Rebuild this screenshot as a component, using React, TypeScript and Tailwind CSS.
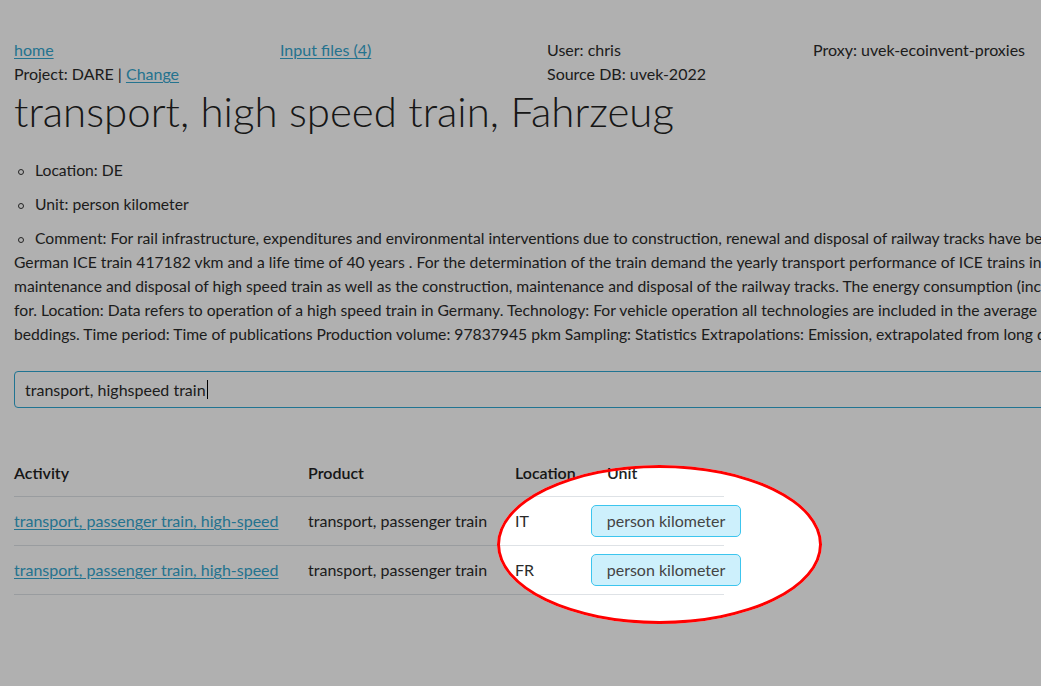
import React from 'react';

const linkCls = 'text-[#35a7cf] underline underline-offset-2';

const commentLines = [
  'Comment: For rail infrastructure, expenditures and environmental interventions due to construction, renewal and disposal of railway tracks have been',
  'German ICE train 417182 vkm and a life time of 40 years . For the determination of the train demand the yearly transport performance of ICE trains in Germany',
  'maintenance and disposal of high speed train as well as the construction, maintenance and disposal of the railway tracks. The energy consumption (incl.',
  'for. Location: Data refers to operation of a high speed train in Germany. Technology: For vehicle operation all technologies are included in the average',
  'beddings. Time period: Time of publications Production volume: 97837945 pkm Sampling: Statistics Extrapolations: Emission, extrapolated from long distance',
];

const rows = [
  { activity: 'transport, passenger train, high-speed', product: 'transport, passenger train', location: 'IT', unit: 'person kilometer' },
  { activity: 'transport, passenger train, high-speed', product: 'transport, passenger train', location: 'FR', unit: 'person kilometer' },
];

const Bullet = () => (
  <span className="inline-flex w-[21px] items-center align-middle">
    <span className="ml-[4px] h-[6px] w-[6px] rounded-full border border-[#333]"></span>
  </span>
);

export default function App() {
  return (
    <div
      className="relative w-[1041px] h-[686px] overflow-hidden bg-white text-[#2b2b2b]"
      style={{ fontFamily: 'Lato, "Open Sans", sans-serif' }}
    >
      <div className="w-[1200px] pl-[14px] pt-[38px] text-[16px]">
        <div className="grid grid-cols-[266px_267px_266px_1fr] leading-6">
          <div><a className={linkCls}>home</a></div>
          <div><a className={linkCls}>Input files (4)</a></div>
          <div>User: chris</div>
          <div>Proxy: uvek-ecoinvent-proxies</div>
          <div>Project: DARE | <a className={linkCls}>Change</a></div>
          <div></div>
          <div>Source DB: uvek-2022</div>
          <div></div>
        </div>

        <h1 className="mt-[1px] text-[42px] leading-[48px] font-light text-[#222]">
          transport, high speed train, Fahrzeug
        </h1>

        <ul className="mt-[23px] leading-6 text-[15.7px]">
          <li className="mb-[10px]"><Bullet />Location: DE</li>
          <li className="mb-[10px]"><Bullet />Unit: person kilometer</li>
          <li className="mb-[10px] whitespace-nowrap">
            {commentLines.map((line, i) => (
              <div key={i}>
                {i === 0 && <Bullet />}
                {line}
              </div>
            ))}
          </li>
        </ul>

        <div className="mt-[25px] flex h-[37px] w-[1060px] items-center rounded-[4px] border border-[#2fa9d4] pl-[10px]">
          <span>transport, highspeed train</span>
          <span className="ml-[1px] h-[19px] w-[1px] bg-black"></span>
        </div>

        <div className="mt-[41px] w-[710px]">
          <div className="grid h-[48px] grid-cols-[294px_207px_76px_133px] items-center border-b border-[#dee2e6] font-semibold text-[#222]">
            <div>Activity</div>
            <div>Product</div>
            <div>Location</div>
            <div className="pl-[16px]">Unit</div>
          </div>
          {rows.map((r, i) => (
            <div key={i} className="grid h-[49px] grid-cols-[294px_207px_76px_133px] items-center border-b border-[#dee2e6]">
              <div><a className={linkCls}>{r.activity}</a></div>
              <div>{r.product}</div>
              <div>{r.location}</div>
              <div>
                <span className="flex h-[32px] w-[150px] items-center justify-center rounded-[5px] border border-[#3cc5ee] bg-[#cdf0fc] text-[#444]">
                  {r.unit}
                </span>
              </div>
            </div>
          ))}
        </div>
      </div>

      <div className="absolute left-[497px] top-[465px] h-[159px] w-[325px] rounded-[50%] border-[3px] border-[#ff0000] shadow-[0_0_0_2000px_rgba(0,0,0,0.31)]"></div>
    </div>
  );
}
